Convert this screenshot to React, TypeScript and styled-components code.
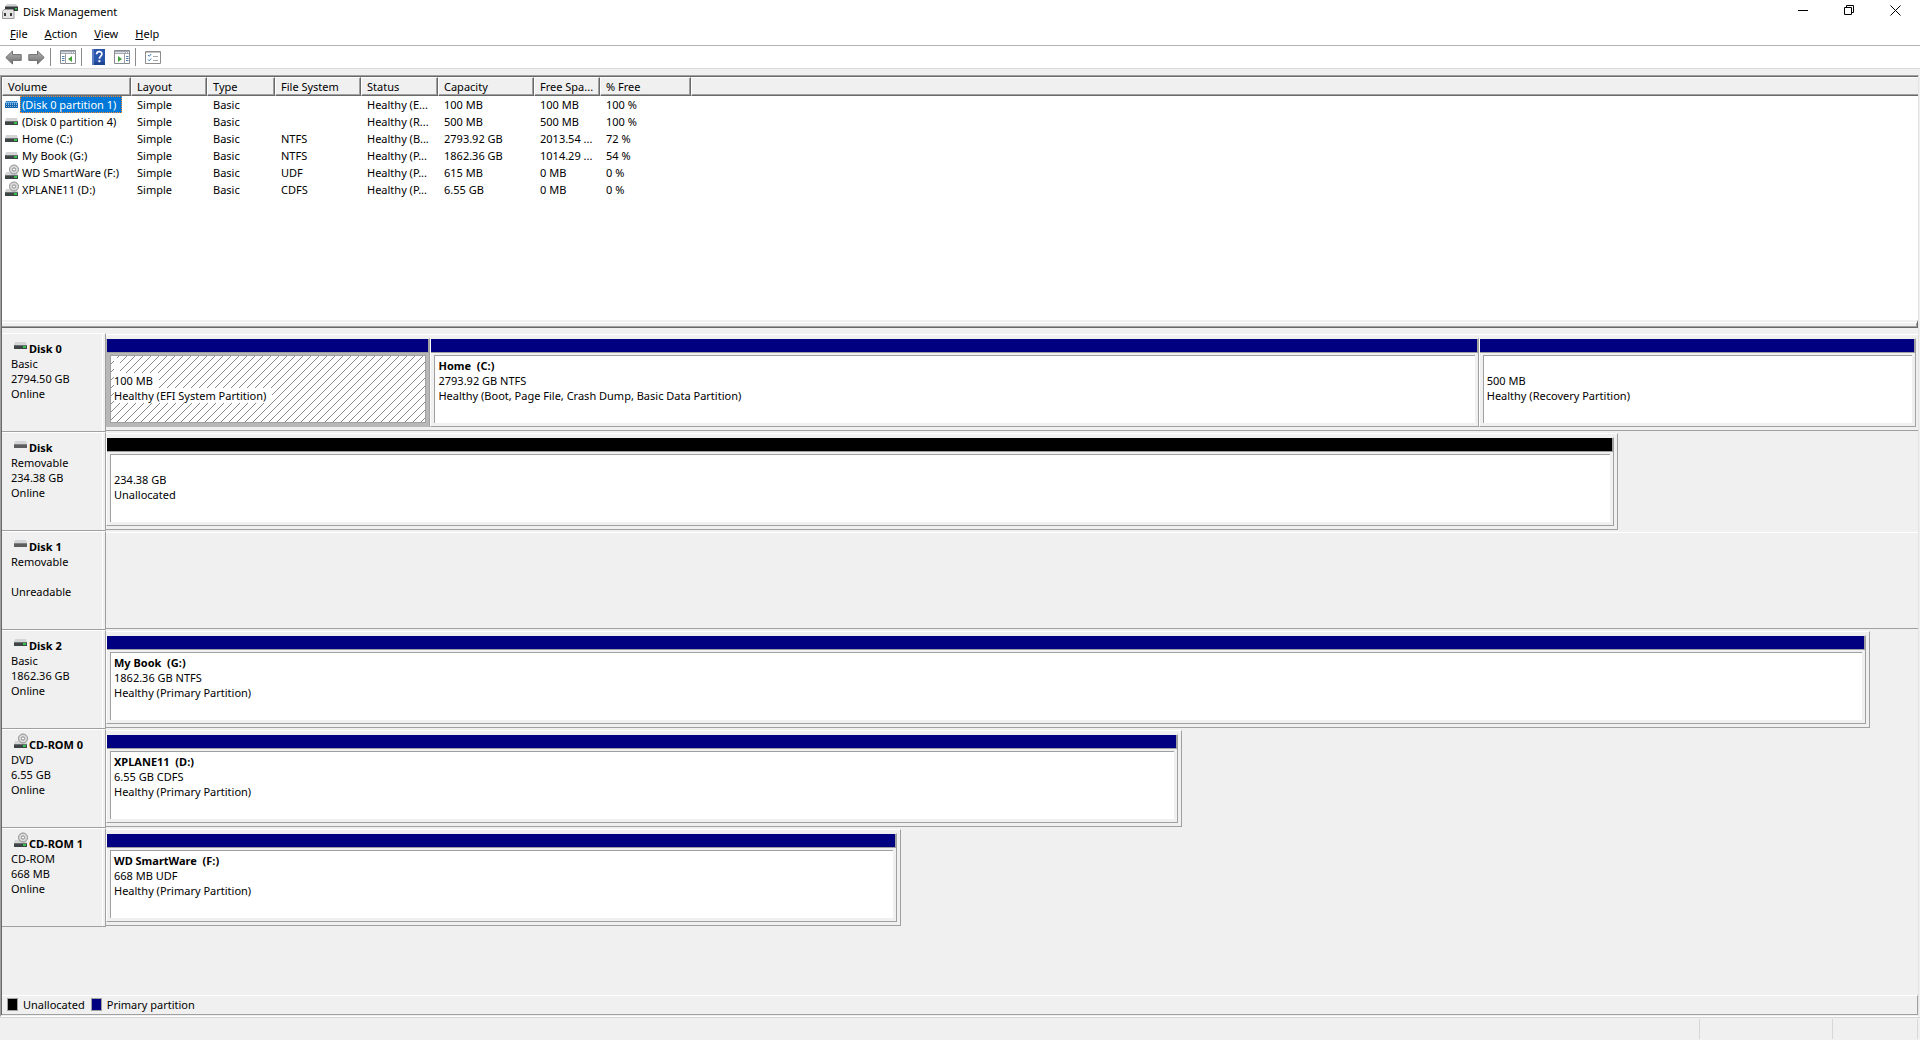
import React from "react";
import styled, { createGlobalStyle, css } from "styled-components";

const GlobalStyle = createGlobalStyle`
  * { box-sizing: border-box; }
  html, body, #root { height: 100%; margin: 0; }
  body {
    background: #f0f0f0;
    color: #000;
    font-family: "Noto Sans", "Open Sans", sans-serif;
    font-size: 11px;
    line-height: 15px;
  }
`;

const Window = styled.div`
  display: flex;
  flex-direction: column;
  min-height: 100vh;
`;

const TitleBar = styled.header`
  display: flex;
  align-items: center;
  height: 24px;
  padding: 0 2px 2px;
  background: #fff;
`;

const Title = styled.h1`
  flex: 1;
  margin: 0 0 0 5px;
  font-size: 11px;
  font-weight: 400;
`;

const CaptionButton = styled.button`
  display: grid;
  place-items: center;
  align-self: flex-start;
  width: 46px;
  height: 21px;
  padding: 0;
  border: 0;
  background: none;
`;

const MenuBar = styled.nav`
  display: flex;
  gap: 1px;
  height: 22px;
  padding-left: 2px;
  border-bottom: 1px solid #b4b4b4;
  background: #fff;
`;

const MenuButton = styled.button`
  padding: 0 8px 2px;
  border: 0;
  background: none;
  color: inherit;
  font: inherit;
  line-height: 18px;
`;

const Toolbar = styled.div`
  display: flex;
  align-items: center;
  height: 23px;
  padding-left: 2px;
  border-bottom: 1px solid #dadada;
  background: #fff;
`;

const ToolButton = styled.button`
  display: grid;
  place-items: center;
  width: 23px;
  height: 22px;
  padding: 0;
  border: 0;
  background: none;
`;

const ToolDivider = styled.span`
  width: 1px;
  height: 18px;
  margin: 0 5px 0 2px;
  background: #8c8c8c;
`;

const Client = styled.main`
  flex: 1;
  display: flex;
  flex-direction: column;
  margin: 6px 1px 0 0;
  padding-bottom: 1px;
  border-style: solid;
  border-width: 1px;
  border-color: #a0a0a0 #e3e3e3 #fff #a0a0a0;
`;

const Panes = styled.div`
  flex: 1;
  display: flex;
  flex-direction: column;
  border-top: 1px solid #696969;
  border-left: 1px solid #696969;
`;

const VolumePane = styled.section`
  height: 243px;
  background: #fff;
`;

const VolumeTable = styled.table`
  width: 100%;
  table-layout: fixed;
  border-collapse: separate;
  border-spacing: 0;
`;

const Column = styled.col<{ $width?: number }>`
  width: ${(p) => (p.$width ? `${p.$width}px` : "auto")};
`;

const HeadCell = styled.th`
  height: 19px;
  padding: 0 0 0 5px;
  border-style: solid;
  border-width: 1px;
  border-color: #fff #696969 #696969 #fff;
  box-shadow: inset -1px -1px #a0a0a0;
  background: #f0f0f0;
  font-weight: 400;
  text-align: left;
  white-space: nowrap;
  &:last-child {
    border-right: 0;
    box-shadow: inset 0 -1px #a0a0a0;
  }
`;

const Cell = styled.td`
  height: 17px;
  padding: 0 0 0 6px;
  line-height: 17px;
  white-space: nowrap;
`;

const NameCell = styled(Cell)`
  padding-left: 2px;
`;

const VolumeName = styled.div`
  display: flex;
  align-items: flex-start;
  height: 17px;
`;

const VolumeLabel = styled.span<{ $selected?: boolean }>`
  margin-left: 1px;
  padding: 0 6px 0 2px;
  ${(p) =>
    p.$selected &&
    css`
      background: #0078d7;
      color: #fff;
      outline: 1px dotted #ff8728;
      outline-offset: -1px;
    `}
`;

const Splitter = styled.div`
  height: 8px;
  border-style: solid;
  border-width: 2px 1px 1px 0;
  border-color: #f0f0f0 #696969 #696969;
  box-shadow: inset 0 1px #fff, inset -1px -1px #a0a0a0;
`;

const DiskPane = styled.section`
  flex: 1;
  padding-top: 5px;
`;

const DiskRow = styled.article`
  display: flex;
  min-height: 99px;
`;

const DiskLabel = styled.div`
  width: 104px;
  padding: 7px 0 0 9px;
  border-style: solid;
  border-width: 1px 1px 1px 0;
  border-color: #fff #a0a0a0 #a0a0a0;
  box-shadow: inset -2px 0 #f0f0f0, inset -3px 0 #fff;
`;

const DiskName = styled.h2`
  display: flex;
  align-items: flex-start;
  height: 15px;
  margin: 0;
  padding-left: 2px;
  font-size: 11px;
  line-height: 15px;

  svg {
    flex: none;
    margin: -4px 1px 0 0;
  }
`;

const Line = styled.p`
  min-height: 15px;
  margin: 0;
`;

const Track = styled.div`
  flex: 1;
  display: flex;
`;

const Frame = styled.div<{ $share: number }>`
  display: flex;
  width: ${(p) => p.$share}%;
  margin: 1px 0;
  padding: ${(p) => (p.$share === 100 ? "3px 2px 3px 0" : "3px 3px 3px 0")};
  border-style: solid;
  border-width: ${(p) => (p.$share === 100 ? "1px 0" : "1px 1px 1px 0")};
  border-color: #fff #a0a0a0 #a0a0a0;
`;

const Partition = styled.div<{ $grow: number; $selected?: boolean }>`
  flex: ${(p) => p.$grow} 1 0;
  display: flex;
  flex-direction: column;
  border-style: solid;
  border-width: 1px;
  border-color: ${(p) => (p.$selected ? "#f0f0f0 #a0a0a0 #b8b8b8 #b8b8b8" : "#f0f0f0 #a0a0a0 #a0a0a0 #fff")};
  background: ${(p) => (p.$selected ? "#b8b8b8" : "#f0f0f0")};
`;

const Strip = styled.div<{ $color: string }>`
  height: 14px;
  border-style: solid;
  border-width: 0 1px 1px 0;
  border-color: #a0a0a0;
  background: ${(p) => p.$color};
`;

const Details = styled.div<{ $selected?: boolean }>`
  flex: 1;
  margin: 2px 3px 3px;
  padding: 2px 3px;
  border-style: solid;
  border-width: 1px 0 0 1px;
  border-color: #a0a0a0;
  background: #fff;
  ${(p) =>
    p.$selected &&
    css`
      border-width: 1px;
      background: #fff
        linear-gradient(135deg, transparent 45%, #8a8a8a 46% 54%, transparent 55%)
        0 0 / 8px 8px;
    `}
`;

const DetailName = styled.h3`
  margin: 0;
  font-size: 11px;
  line-height: 15px;
  white-space: pre;
`;

const LineText = styled.span`
  display: inline-block;
  height: 15px;
  padding-right: 6px;
  background: #fff;
  vertical-align: top;
`;

const Legend = styled.footer`
  display: flex;
  align-items: center;
  height: 20px;
  padding: 0 0 1px 5px;
  border-style: solid;
  border-width: 1px 1px 1px 0;
  border-color: #fff #a0a0a0 #a0a0a0;
`;

const Swatch = styled.span<{ $color: string }>`
  width: 11px;
  height: 13px;
  margin-right: 5px;
  border: 1px solid #a0a0a0;
  background: ${(p) => p.$color};
`;

const LegendText = styled.span`
  margin-right: 6px;
`;

const StatusBar = styled.div`
  display: flex;
  height: 23px;
  padding: 1px 2px 1px 0;
  border-top: 1px solid #d7d7d7;
`;

const StatusPart = styled.div<{ $width?: number }>`
  ${(p) => (p.$width ? `width: ${p.$width}px;` : "flex: 1;")}
  border-right: 1px solid #d7d7d7;
`;

type Kind = "drive" | "selected" | "removable" | "cd";

const DriveIcon = ({ kind }: { kind: Kind }) => {
  if (kind === "selected") {
    return (
      <svg width="15" height="16" viewBox="0 0 15 16" aria-hidden="true">
        <path d="M2 5h11l1 3H1z" fill="#5d9fd4" />
        <path d="M1 8h13v4H1z" fill="#1b5f9c" />
        <path d="M2 5.5h11M1 7.5h13M1 9.5h13M1 11.5h13" stroke="#0f6fc0" strokeDasharray="1 1" />
        <path d="M2 6.5h12M2 8.5h12M2 10.5h12" stroke="#8fc3ee" strokeDasharray="1 1" />
      </svg>
    );
  }
  const top = kind === "cd" ? 8 : 5;
  const removable = kind === "removable";
  return (
    <svg width="15" height="16" viewBox="0 0 15 16" aria-hidden="true">
      <path d={`M2 ${top}h11l1 3H1z`} fill="#d3d5d6" />
      <path d={`M1 ${top + 3}h13v4H1z`} fill={removable ? "#5e5e5e" : "#3f4447"} />
      <path d={`M1 ${top + 3}h13v1H1z`} fill={removable ? "#808080" : "#6b7073"} />
      {!removable && <path d={`M10 ${top + 4}h3v2h-3z`} fill="#35c24a" />}
      {kind === "cd" && (
        <>
          <circle cx="10" cy="5.5" r="4.5" fill="#dadada" stroke="#8e8e8e" />
          <circle cx="10" cy="5.5" r="1.6" fill="#fff" stroke="#8a8a8a" />
        </>
      )}
    </svg>
  );
};

const AppIcon = () => (
  <svg width="16" height="16" viewBox="0 0 16 16" aria-hidden="true">
    <path d="M5 1h9l2 3H3z" fill="#d0d2d3" />
    <path d="M3 3.5h13V8H3z" fill="#33393c" />
    <path d="M13 5h2v1.5h-2z" fill="#3ccf50" />
    <path d="M0.5 8.5L2 6.5h9l1 2v7H0.5z" fill="#e4e4e4" stroke="#9a9a9a" />
    <path d="M2 10h2v3H2zM8 10h2v3H8z" fill="#3a3a3a" />
  </svg>
);

const ArrowIcon = ({ forward }: { forward?: boolean }) => (
  <svg width="17" height="15" viewBox="0 0 17 15" aria-hidden="true">
    <defs>
      <linearGradient id={forward ? "fwd" : "back"} x1="0" y1="0" x2="0" y2="1">
        <stop offset="0" stopColor="#b5b5b5" />
        <stop offset="1" stopColor="#6e6e6e" />
      </linearGradient>
    </defs>
    <path
      d={forward ? "M16.2 7.5L9.5 1v3.6H.8v5.8h8.7V14z" : "M.8 7.5L7.5 1v3.6h8.7v5.8H7.5V14z"}
      fill={`url(#${forward ? "fwd" : "back"})`}
      stroke="#6f6f6f"
      strokeLinejoin="round"
    />
  </svg>
);

const PaneIcon = ({ right }: { right?: boolean }) => (
  <svg width="16" height="14" viewBox="0 0 16 14" aria-hidden="true">
    <path d="M.5.5h15v13H.5z" fill="#fff" stroke="#868c92" />
    <path d="M1 1h14v3H1z" fill="#a4abb2" />
    <path d="M1 2.5h10" stroke="#d8dde2" />
    <path d="M12 2h1v1h-1zM14 2h1v1h-1z" fill="#fff" />
    <path d={right ? "M10.5 4v9.5" : "M5.5 4v9.5"} stroke="#9aa0a6" />
    <path
      d={right ? "M12 6.5h2.5M12 8.5h2.5M12 10.5h2.5" : "M2 6.5h2.5M2 8.5h2.5M2 10.5h2.5"}
      stroke="#4f7fae"
    />
    <path d={right ? "M4 6l4 3-4 3z" : "M12 6L8 9l4 3z"} fill="#46a33c" />
  </svg>
);

const HelpIcon = () => (
  <svg width="13" height="16" viewBox="0 0 13 16" aria-hidden="true">
    <path d="M0 0h13v16H0z" fill="#2a55ad" />
    <path d="M0 0h2v16H0z" fill="#5b7fc4" />
    <path d="M2 13h11v3H2z" fill="#1f4490" />
    <path d="M4.6 5.2C4.6 1.8 9.9 1.8 9.9 5c0 2-2.5 2.2-2.5 4.8" fill="none" stroke="#fff" strokeWidth="1.7" />
    <path d="M6.4 11.2h2v2h-2z" fill="#fff" />
  </svg>
);

const ChecklistIcon = () => (
  <svg width="16" height="13" viewBox="0 0 16 13" aria-hidden="true">
    <path d="M.5.5h15v12H.5z" fill="#fff" stroke="#8c8c8c" />
    <path d="M1 1.5h14" stroke="#c4c4c4" />
    <path d="M3 4l1.2 1.3L6.2 3M3 8.5l1.2 1.3 2-2.3" fill="none" stroke="#3577c0" />
    <path d="M8 5.5h5M8 9.5h5" stroke="#a9a9a9" />
  </svg>
);

const menus = ["File", "Action", "View", "Help"];

const columns: { title: string; width?: number }[] = [
  { title: "Volume", width: 129 },
  { title: "Layout", width: 76 },
  { title: "Type", width: 68 },
  { title: "File System", width: 86 },
  { title: "Status", width: 77 },
  { title: "Capacity", width: 96 },
  { title: "Free Spa...", width: 66 },
  { title: "% Free", width: 91 },
  { title: "" },
];

const volumes: { kind: Kind; name: string; values: string[] }[] = [
  { kind: "selected", name: "(Disk 0 partition 1)", values: ["Simple", "Basic", "", "Healthy (E...", "100 MB", "100 MB", "100 %"] },
  { kind: "drive", name: "(Disk 0 partition 4)", values: ["Simple", "Basic", "", "Healthy (R...", "500 MB", "500 MB", "100 %"] },
  { kind: "drive", name: "Home (C:)", values: ["Simple", "Basic", "NTFS", "Healthy (B...", "2793.92 GB", "2013.54 ...", "72 %"] },
  { kind: "drive", name: "My Book (G:)", values: ["Simple", "Basic", "NTFS", "Healthy (P...", "1862.36 GB", "1014.29 ...", "54 %"] },
  { kind: "cd", name: "WD SmartWare (F:)", values: ["Simple", "Basic", "UDF", "Healthy (P...", "615 MB", "0 MB", "0 %"] },
  { kind: "cd", name: "XPLANE11 (D:)", values: ["Simple", "Basic", "CDFS", "Healthy (P...", "6.55 GB", "0 MB", "0 %"] },
];

const PRIMARY = "#000080";
const UNALLOCATED = "#000000";

interface Part {
  grow: number;
  color: string;
  name?: string;
  lines: string[];
  selected?: boolean;
}

const disks: { kind: Kind; name: string; lines: string[]; share: number; parts: Part[] }[] = [
  {
    kind: "drive",
    name: "Disk 0",
    lines: ["Basic", "2794.50 GB", "Online"],
    share: 100,
    parts: [
      { grow: 323, color: PRIMARY, lines: ["100 MB", "Healthy (EFI System Partition)"], selected: true },
      {
        grow: 1048,
        color: PRIMARY,
        name: "Home  (C:)",
        lines: ["2793.92 GB NTFS", "Healthy (Boot, Page File, Crash Dump, Basic Data Partition)"],
      },
      { grow: 436, color: PRIMARY, lines: ["500 MB", "Healthy (Recovery Partition)"] },
    ],
  },
  {
    kind: "removable",
    name: "Disk",
    lines: ["Removable", "234.38 GB", "Online"],
    share: 83.44,
    parts: [{ grow: 1, color: UNALLOCATED, lines: ["234.38 GB", "Unallocated"] }],
  },
  { kind: "removable", name: "Disk 1", lines: ["Removable", "", "Unreadable"], share: 100, parts: [] },
  {
    kind: "drive",
    name: "Disk 2",
    lines: ["Basic", "1862.36 GB", "Online"],
    share: 97.35,
    parts: [{ grow: 1, color: PRIMARY, name: "My Book  (G:)", lines: ["1862.36 GB NTFS", "Healthy (Primary Partition)"] }],
  },
  {
    kind: "cd",
    name: "CD-ROM 0",
    lines: ["DVD", "6.55 GB", "Online"],
    share: 59.38,
    parts: [{ grow: 1, color: PRIMARY, name: "XPLANE11  (D:)", lines: ["6.55 GB CDFS", "Healthy (Primary Partition)"] }],
  },
  {
    kind: "cd",
    name: "CD-ROM 1",
    lines: ["CD-ROM", "668 MB", "Online"],
    share: 43.87,
    parts: [{ grow: 1, color: PRIMARY, name: "WD SmartWare  (F:)", lines: ["668 MB UDF", "Healthy (Primary Partition)"] }],
  },
];

export default function App() {
  return (
    <Window>
      <GlobalStyle />
      <TitleBar>
        <AppIcon />
        <Title>Disk Management</Title>
        <CaptionButton aria-label="Minimize">
          <svg width="11" height="11" viewBox="0 0 11 11"><path d="M0 5.5h10" stroke="#000" /></svg>
        </CaptionButton>
        <CaptionButton aria-label="Restore">
          <svg width="11" height="11" viewBox="0 0 11 11" fill="none" stroke="#000">
            <path d="M.5 2.5h7v7h-7zM2.5 2.5v-2h7v7h-2" />
          </svg>
        </CaptionButton>
        <CaptionButton aria-label="Close">
          <svg width="11" height="11" viewBox="0 0 11 11"><path d="M.5.5l10 10M10.5.5l-10 10" stroke="#000" /></svg>
        </CaptionButton>
      </TitleBar>
      <MenuBar>
        {menus.map((menu) => (
          <MenuButton key={menu}>
            <u>{menu[0]}</u>
            {menu.slice(1)}
          </MenuButton>
        ))}
      </MenuBar>
      <Toolbar>
        <ToolButton aria-label="Back"><ArrowIcon /></ToolButton>
        <ToolButton aria-label="Forward"><ArrowIcon forward /></ToolButton>
        <ToolDivider />
        <ToolButton aria-label="Show console tree"><PaneIcon /></ToolButton>
        <ToolDivider />
        <ToolButton aria-label="Help topics"><HelpIcon /></ToolButton>
        <ToolButton aria-label="Show action pane"><PaneIcon right /></ToolButton>
        <ToolDivider />
        <ToolButton aria-label="Settings"><ChecklistIcon /></ToolButton>
      </Toolbar>
      <Client>
        <Panes>
          <VolumePane>
            <VolumeTable>
              <colgroup>
                {columns.map((column) => (
                  <Column key={column.title} $width={column.width} />
                ))}
              </colgroup>
              <thead>
                <tr>
                  {columns.map((column) => (
                    <HeadCell key={column.title}>{column.title}</HeadCell>
                  ))}
                </tr>
              </thead>
              <tbody>
                {volumes.map((volume) => (
                  <tr key={volume.name}>
                    <NameCell>
                      <VolumeName>
                        <DriveIcon kind={volume.kind} />
                        <VolumeLabel $selected={volume.kind === "selected"}>{volume.name}</VolumeLabel>
                      </VolumeName>
                    </NameCell>
                    {volume.values.map((value, i) => (
                      <Cell key={i}>{value}</Cell>
                    ))}
                    <Cell />
                  </tr>
                ))}
              </tbody>
            </VolumeTable>
          </VolumePane>
          <Splitter />
          <DiskPane>
            {disks.map((disk) => (
              <DiskRow key={disk.name}>
                <DiskLabel>
                  <DiskName>
                    <DriveIcon kind={disk.kind} />
                    {disk.name}
                  </DiskName>
                  {disk.lines.map((line, i) => (
                    <Line key={i}>{line}</Line>
                  ))}
                </DiskLabel>
                <Track>
                  <Frame $share={disk.share}>
                    {disk.parts.map((part) => (
                      <Partition key={part.lines[0]} $grow={part.grow} $selected={part.selected}>
                        <Strip $color={part.color} />
                        <Details $selected={part.selected}>
                          <DetailName>
                            <LineText>{part.name}</LineText>
                          </DetailName>
                          {part.lines.map((line) => (
                            <Line key={line}>
                              <LineText>{line}</LineText>
                            </Line>
                          ))}
                        </Details>
                      </Partition>
                    ))}
                  </Frame>
                </Track>
              </DiskRow>
            ))}
          </DiskPane>
          <Legend>
            <Swatch $color={UNALLOCATED} />
            <LegendText>Unallocated</LegendText>
            <Swatch $color={PRIMARY} />
            <LegendText>Primary partition</LegendText>
          </Legend>
        </Panes>
      </Client>
      <StatusBar>
        <StatusPart />
        <StatusPart $width={133} />
        <StatusPart $width={85} />
      </StatusBar>
    </Window>
  );
}
